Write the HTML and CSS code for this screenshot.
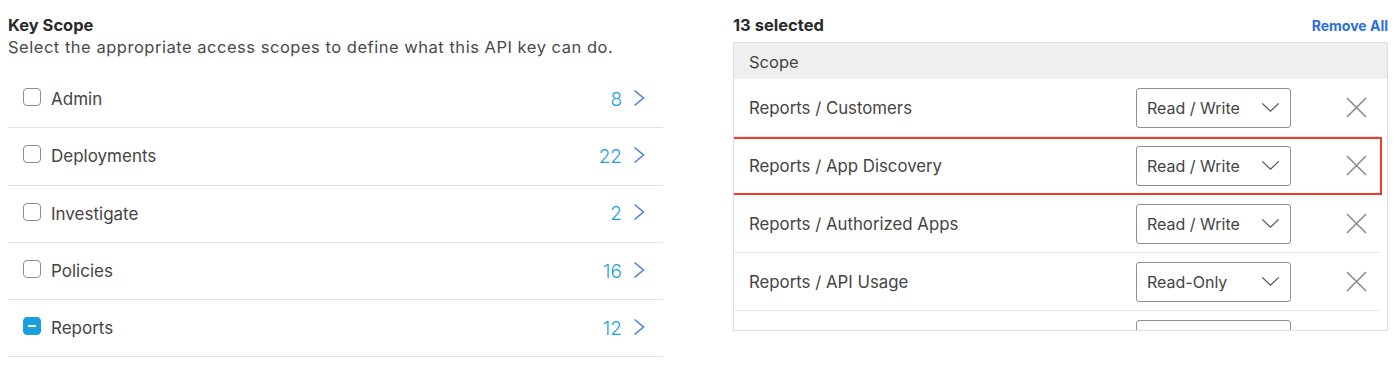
FILE: index.html
```html
<!DOCTYPE html>
<html lang="en">
<head>
  <meta charset="UTF-8">
  <meta name="viewport" content="width=device-width, initial-scale=1.0">
  <title>Key Scope</title>
  <link rel="stylesheet" href="styles.css">
</head>
<body>
  <div class="page">
    <div class="scope-picker">
      <h2>Key Scope</h2>
      <p class="hint">Select the appropriate access scopes to define what this API key can do.</p>

      <div class="scope-list">
        <div class="scope-item">
          <span class="check"></span>
          <span class="scope-name">Admin</span>
          <span class="count">8</span>
          <svg class="chev" viewBox="0 0 12 18"><path d="M1.5 1.5 L10.5 9 L1.5 16.5"/></svg>
        </div>
        <div class="scope-item">
          <span class="check"></span>
          <span class="scope-name">Deployments</span>
          <span class="count">22</span>
          <svg class="chev" viewBox="0 0 12 18"><path d="M1.5 1.5 L10.5 9 L1.5 16.5"/></svg>
        </div>
        <div class="scope-item">
          <span class="check"></span>
          <span class="scope-name">Investigate</span>
          <span class="count">2</span>
          <svg class="chev" viewBox="0 0 12 18"><path d="M1.5 1.5 L10.5 9 L1.5 16.5"/></svg>
        </div>
        <div class="scope-item">
          <span class="check"></span>
          <span class="scope-name">Policies</span>
          <span class="count">16</span>
          <svg class="chev" viewBox="0 0 12 18"><path d="M1.5 1.5 L10.5 9 L1.5 16.5"/></svg>
        </div>
        <div class="scope-item">
          <span class="check partial"></span>
          <span class="scope-name">Reports</span>
          <span class="count">12</span>
          <svg class="chev" viewBox="0 0 12 18"><path d="M1.5 1.5 L10.5 9 L1.5 16.5"/></svg>
        </div>
      </div>
    </div>

    <div class="selected">
      <div class="selected-head">
        <h2>13 selected</h2>
        <a href="#" class="remove-all">Remove All</a>
      </div>

      <div class="table">
        <div class="table-head">Scope</div>
        <div class="rows">
          <div class="row">
            <span class="row-name">Reports / Customers</span>
            <div class="select">Read / Write<svg viewBox="0 0 20 12"><path d="M1 1.5 L10 10 L19 1.5"/></svg></div>
            <svg class="remove" viewBox="0 0 22 22"><path d="M1 1 L21 21 M21 1 L1 21"/></svg>
          </div>
          <div class="row marked">
            <span class="row-name">Reports / App Discovery</span>
            <div class="select">Read / Write<svg viewBox="0 0 20 12"><path d="M1 1.5 L10 10 L19 1.5"/></svg></div>
            <svg class="remove" viewBox="0 0 22 22"><path d="M1 1 L21 21 M21 1 L1 21"/></svg>
          </div>
          <div class="row">
            <span class="row-name">Reports / Authorized Apps</span>
            <div class="select">Read / Write<svg viewBox="0 0 20 12"><path d="M1 1.5 L10 10 L19 1.5"/></svg></div>
            <svg class="remove" viewBox="0 0 22 22"><path d="M1 1 L21 21 M21 1 L1 21"/></svg>
          </div>
          <div class="row">
            <span class="row-name">Reports / API Usage</span>
            <div class="select">Read-Only<svg viewBox="0 0 20 12"><path d="M1 1.5 L10 10 L19 1.5"/></svg></div>
            <svg class="remove" viewBox="0 0 22 22"><path d="M1 1 L21 21 M21 1 L1 21"/></svg>
          </div>
          <div class="row">
            <span class="row-name"></span>
            <div class="select"></div>
            <span class="remove"></span>
          </div>
        </div>
      </div>
    </div>
  </div>
</body>
</html>
```

FILE: styles.css
```css
body {
  font-family: Inter, "Liberation Sans", sans-serif;
  margin: 0;
  padding: 0;
  background-color: #fff;
  color: #444;
}
.page {
  display: grid;
  grid-template-columns: 655px 655px;
  gap: 70px;
  padding: 15px 8px 0;
}
h2 {
  margin: 0;
  font-size: 16.5px;
  font-weight: 700;
  line-height: 20px;
  color: #2a2a2a;
}
.hint {
  margin: 2px 0 0;
  font-size: 16.5px;
  letter-spacing: 0.52px;
  line-height: 20px;
  color: #4a4a4a;
}
.scope-list {
  margin-top: 14px;
}
.scope-item {
  display: flex;
  align-items: center;
  height: 56.3px;
  padding: 0 18px 0 15px;
  border-bottom: 1px solid #e2e2e2;
}
.check {
  width: 16px;
  height: 16px;
  border: 1.5px solid #8d8d8d;
  border-radius: 4px;
  margin-top: -4px;
  position: relative;
}
.check.partial {
  background-color: #1a9fdc;
  border-color: #1a9fdc;
}
.check.partial::after {
  content: "";
  position: absolute;
  left: 4px;
  right: 4px;
  top: 7px;
  height: 2px;
  background: #fff;
}
.scope-name {
  flex: 1;
  margin-left: 10px;
  font-size: 17px;
  color: #444;
}
.count {
  font-size: 19px;
  font-weight: 300;
  color: #1f9fe0;
}
.chev {
  width: 12px;
  height: 18px;
  margin-left: 11px;
  margin-top: -3px;
  fill: none;
  stroke: #4d82dc;
  stroke-width: 1.6;
}
.selected-head {
  display: flex;
  justify-content: space-between;
  align-items: baseline;
}
.remove-all {
  font-size: 14px;
  font-weight: 700;
  color: #2d6fd8;
  text-decoration: none;
}
.table {
  margin-top: 7px;
  height: 287px;
  border: 1px solid #dedede;
  overflow: hidden;
}
.table-head {
  height: 36px;
  line-height: 38px;
  padding-left: 15px;
  background-color: #efefef;
  font-size: 16.5px;
  color: #444;
}
.rows {
  margin-right: 8px;
}
.row {
  display: flex;
  align-items: center;
  height: 57px;
  padding: 0 12px 0 15px;
  border-bottom: 1px solid #e6e6e6;
  position: relative;
}
.row.marked::after {
  content: "";
  position: absolute;
  left: -3px;
  right: -3px;
  top: 0;
  bottom: -1px;
  border: 2px solid #ef3a25;
}
.row-name {
  flex: 1;
  font-size: 16.8px;
  color: #444;
}
.select {
  width: 143px;
  height: 38px;
  padding-left: 10px;
  border: 1px solid #8c9097;
  border-radius: 3px;
  display: flex;
  align-items: center;
  justify-content: space-between;
  font-size: 16px;
  color: #444;
}
.select svg {
  width: 19px;
  height: 11px;
  margin-right: 10px;
  fill: none;
  stroke: #555;
  stroke-width: 1.4;
}
.remove {
  width: 21px;
  height: 21px;
  margin-left: 55px;
  fill: none;
  stroke: #8a8a8a;
  stroke-width: 1.6;
}
```
